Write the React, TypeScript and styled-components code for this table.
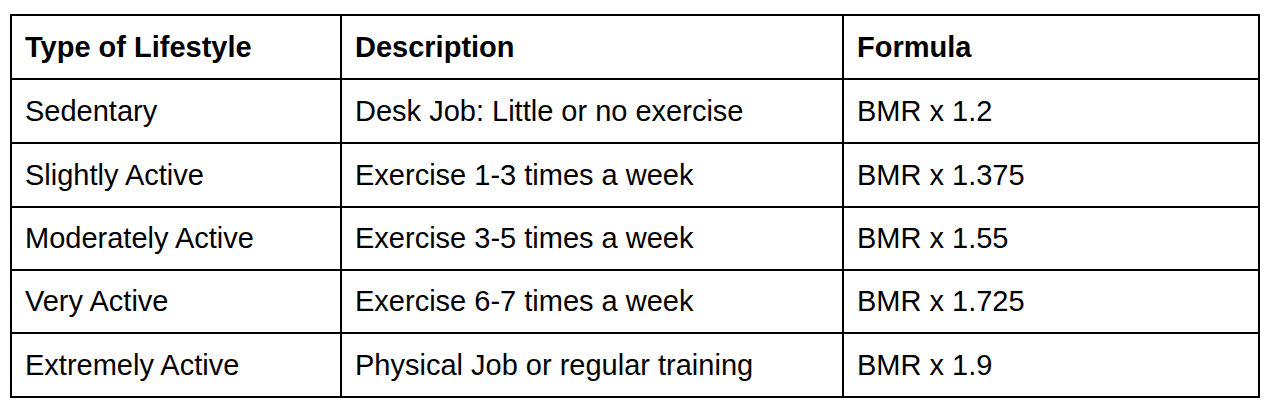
import React from "react";
import styled, { createGlobalStyle } from "styled-components";

const Global = createGlobalStyle`
  html, body { margin: 0; padding: 0; background: #ffffff; }
  body { font-family: "Liberation Sans", Arial, sans-serif; color: #000; }
`;

const Page = styled.div`
  padding: 14px 10px;
`;

const Table = styled.table`
  border-collapse: collapse;
  table-layout: fixed;
  width: 1250px;
  font-family: "Liberation Sans", Arial, sans-serif;
  font-size: 29px;
`;

const Row = styled.tr<{ $h: number }>`
  height: ${(p) => p.$h}px;
`;

const Cell = styled.td<{ $head?: boolean }>`
  border: 2px solid #000;
  padding: 0 13px;
  box-sizing: border-box;
  vertical-align: middle;
  font-weight: ${(p) => (p.$head ? 700 : 400)};
  white-space: nowrap;
  line-height: 1;
`;

const rows: [string, string, string, number][] = [
  ["Sedentary", "Desk Job: Little or no exercise", "BMR x 1.2", 64],
  ["Slightly Active", "Exercise 1-3 times a week", "BMR x 1.375", 64],
  ["Moderately Active", "Exercise 3-5 times a week", "BMR x 1.55", 63],
  ["Very Active", "Exercise 6-7 times a week", "BMR x 1.725", 63],
  ["Extremely Active", "Physical Job or regular training", "BMR x 1.9", 64],
];

export default function App() {
  return (
    <Page>
      <Global />
      <Table>
        <colgroup>
          <col style={{ width: 330 }} />
          <col style={{ width: 502 }} />
          <col style={{ width: 416 }} />
        </colgroup>
        <tbody>
          <Row $h={64}>
            <Cell $head>Type of Lifestyle</Cell>
            <Cell $head>Description</Cell>
            <Cell $head>Formula</Cell>
          </Row>
          {rows.map((r) => (
            <Row key={r[0]} $h={r[3]}>
              <Cell>{r[0]}</Cell>
              <Cell>{r[1]}</Cell>
              <Cell>{r[2]}</Cell>
            </Row>
          ))}
        </tbody>
      </Table>
    </Page>
  );
}
